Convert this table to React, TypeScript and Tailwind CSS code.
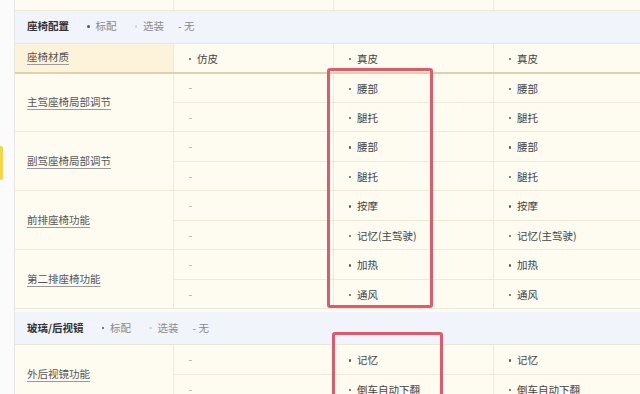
import React from "react";

type Group = { label: string; rows: [string, string, string][]; active?: boolean };

const seatGroups: Group[] = [
  { label: "座椅材质", rows: [["仿皮", "真皮", "真皮"]], active: true },
  { label: "主驾座椅局部调节", rows: [["-", "腰部", "腰部"], ["-", "腿托", "腿托"]] },
  { label: "副驾座椅局部调节", rows: [["-", "腰部", "腰部"], ["-", "腿托", "腿托"]] },
  { label: "前排座椅功能", rows: [["-", "按摩", "按摩"], ["-", "记忆(主驾驶)", "记忆(主驾驶)"]] },
  { label: "第二排座椅功能", rows: [["-", "加热", "加热"], ["-", "通风", "通风"]] },
];

const mirrorGroups: Group[] = [
  { label: "外后视镜功能", rows: [["-", "记忆", "记忆"], ["-", "倒车自动下翻", "倒车自动下翻"]] },
];

const Dot = ({ light }: { light?: boolean }) => (
  <span
    className={`inline-block w-[2.5px] h-[2.5px] rounded-full mr-[6px] ${
      light ? "bg-[#d4d4d4]" : "bg-[#555]"
    }`}
  />
);

const Value = ({ v }: { v: string }) =>
  v === "-" ? (
    <span className="text-[#a0a0a0]">-</span>
  ) : (
    <span className="inline-flex items-center text-[#444]">
      <Dot />
      {v}
    </span>
  );

const SectionHeader = ({ title }: { title: string }) => (
  <tr>
    <td colSpan={4} className="h-[33px] bg-[#f1f4fb] border-b border-[#ebe6d6] pl-[12px]">
      <div className="flex items-center">
        <span className="font-bold text-[#333] mr-[18px]">{title}</span>
        <span className="inline-flex items-center text-[#888] mr-[18px]">
          <Dot />
          标配
        </span>
        <span className="inline-flex items-center text-[#8c8c8c] mr-[14px]">
          <Dot light />
          选装
        </span>
        <span className="text-[#888]">- 无</span>
      </div>
    </td>
  </tr>
);

const GroupRows = ({ g }: { g: Group }) => (
  <>
    {g.rows.map((r, i) => {
      const last = i === g.rows.length - 1;
      const bottom = g.active ? "border-b-2 border-b-[#ddd2ab]" : "border-b border-b-[#efe9d9]";
      return (
        <tr key={i} className="h-[29.5px]">
          {i === 0 && (
            <td
              rowSpan={g.rows.length}
              className={`pl-[12px] border-r border-[#efe9d9] ${bottom} ${
                g.active ? "bg-[#fdf3da]" : "bg-[#fefbf0]"
              }`}
            >
              <span className="underline underline-offset-[3px] decoration-[#999] text-[#555]">
                {g.label}
              </span>
            </td>
          )}
          {r.map((v, j) => (
            <td
              key={j}
              className={`pl-[15px] bg-[#fefbf0] ${j < 2 ? "border-r border-[#efe9d9]" : ""} ${
                last ? bottom : "border-b border-b-[#efe9d9]"
              }`}
            >
              <Value v={v} />
            </td>
          ))}
        </tr>
      );
    })}
  </>
);

export default function App() {
  return (
    <div
      className="relative w-[640px] h-[394px] overflow-hidden bg-[#fafafa] flex text-[10.5px] leading-none"
      style={{ fontFamily: '"Noto Sans CJK SC", "Noto Sans", sans-serif' }}
    >
      {/* left gutter */}
      <div className="w-[15px] shrink-0 border-r border-[#e6e6e6] bg-[#fbfbfb] pt-[146px]">
        <div className="w-[3px] h-[34px] bg-[#f5d64a] rounded-r-[2px]" />
      </div>

      <table className="table-fixed border-collapse w-[640px] shrink-0">
        <colgroup>
          <col className="w-[158px]" />
          <col className="w-[160px]" />
          <col className="w-[160px]" />
          <col className="w-[162px]" />
        </colgroup>
        <tbody>
          <tr className="h-[10px]">
            <td className="bg-[#fefbf0] border-r border-b border-[#efe9d9]" />
            <td className="bg-[#fefbf0] border-r border-b border-[#efe9d9]" />
            <td className="bg-[#fefbf0] border-r border-b border-[#efe9d9]" />
            <td className="bg-[#fefbf0] border-b border-[#efe9d9]" />
          </tr>
          <SectionHeader title="座椅配置" />
          {seatGroups.map((g) => (
            <GroupRows key={g.label} g={g} />
          ))}
          <tr className="h-[3px]">
            <td colSpan={4} className="bg-[#fafafa]" />
          </tr>
          <SectionHeader title="玻璃/后视镜" />
          {mirrorGroups.map((g) => (
            <GroupRows key={g.label} g={g} />
          ))}
        </tbody>
      </table>

      {/* highlight boxes */}
      <div className="absolute left-[327px] top-[68px] w-[106px] h-[240px] border-[3px] border-[#e15a6c] rounded-[3px]" />
      <div className="absolute left-[332px] top-[332px] w-[111px] h-[80px] border-[3px] border-[#e15a6c] rounded-[3px]" />
    </div>
  );
}
